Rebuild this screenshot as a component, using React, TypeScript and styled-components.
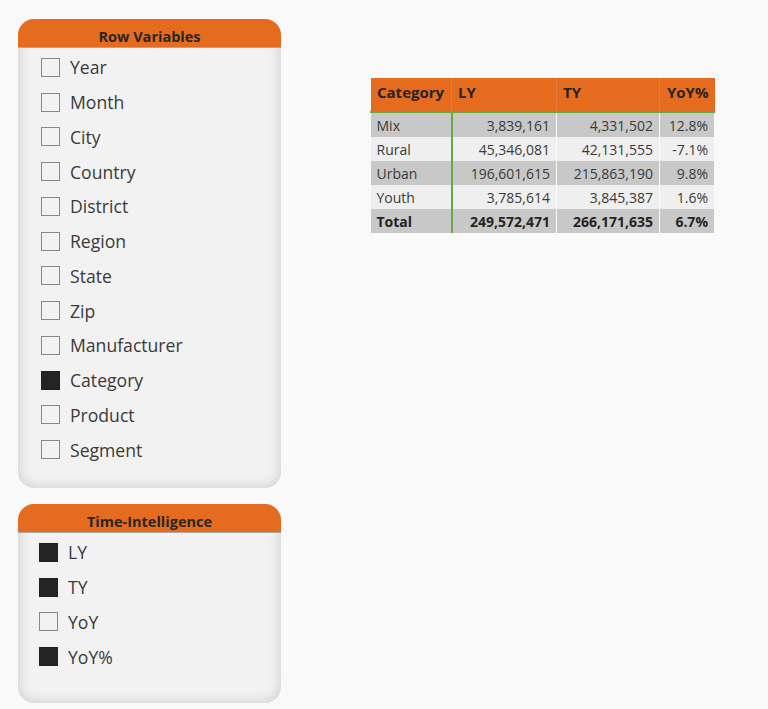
import React from "react";
import styled, { createGlobalStyle } from "styled-components";

const Global = createGlobalStyle`
  html, body { margin: 0; padding: 0; background: #f9f9f9; }
  body { font-family: "Open Sans", "Noto Sans", sans-serif; color: #252423; }
`;

const Page = styled.div`
  display: flex;
  align-items: flex-start;
  gap: 89px;
  padding: 19px 0 0 18px;
  width: 768px;
  height: 709px;
  box-sizing: border-box;
`;

const LeftColumn = styled.div`
  display: flex;
  flex-direction: column;
  gap: 16px;
`;

const Panel = styled.div<{ $height: number }>`
  width: 263px;
  height: ${(p) => p.$height}px;
  border-radius: 16px;
  overflow: hidden;
  background: #f2f2f2;
  box-shadow: inset 0 0 14px rgba(0, 0, 0, 0.17);
  display: flex;
  flex-direction: column;
`;

const PanelHeader = styled.div`
  height: 20px;
  background: #e56c1e;
  border-bottom: 1.5px solid #a8a8a8;
  display: flex;
  align-items: center;
  justify-content: center;
  font-size: 14.5px;
  font-weight: 700;
  color: #2a2622;
  box-sizing: content-box;
  padding-top: 8px;
  line-height: 1;
`;

const List = styled.div<{ $left: number }>`
  display: flex;
  flex-direction: column;
  padding: 2px 0 0 ${(p) => p.$left}px;
`;

const Item = styled.label`
  display: flex;
  align-items: center;
  height: 34.75px;
  gap: 10px;
  font-size: 17.6px;
  color: #3b3a39;
`;

const Box = styled.span<{ $checked: boolean }>`
  width: 19px;
  height: 19px;
  box-sizing: border-box;
  border: 1.5px solid ${(p) => (p.$checked ? "#1f1f1f" : "#8a8886")};
  background: ${(p) => (p.$checked ? "#252423" : "transparent")};
  flex-shrink: 0;
`;

const TableWrap = styled.div`
  margin-top: 59px;
`;

const Table = styled.table`
  border-collapse: collapse;
  font-size: 14px;
  color: #3b3a39;
`;

const HeadCell = styled.th<{ $w: number; $align?: string }>`
  width: ${(p) => p.$w}px;
  height: 34px;
  padding: 0 6px 6px;
  background: #e56c1e;
  text-align: ${(p) => p.$align || "left"};
  font-weight: 700;
  font-size: 15px;
  color: #252423;
  border-bottom: 2px solid #6aa842;
  border-left: 1px solid rgba(255, 255, 255, 0.12);
  box-sizing: border-box;
  vertical-align: middle;
`;

const Row = styled.tr<{ $dark: boolean; $bold?: boolean }>`
  background: ${(p) => (p.$dark ? "#c8c8c8" : "#efefef")};
  font-weight: ${(p) => (p.$bold ? 700 : 400)};
  color: ${(p) => (p.$bold ? "#252423" : "#3b3a39")};
`;

const Cell = styled.td<{ $num?: boolean; $green?: boolean }>`
  height: 22px;
  padding: 2px 6px 0 6px;
  text-align: ${(p) => (p.$num ? "right" : "left")};
  border-right: ${(p) => (p.$green ? "2px solid #6aa842" : "1px solid rgba(255,255,255,0.25)")};
  white-space: nowrap;
  line-height: 1;
  overflow: hidden;
`;

const rowVars = [
  ["Year", false],
  ["Month", false],
  ["City", false],
  ["Country", false],
  ["District", false],
  ["Region", false],
  ["State", false],
  ["Zip", false],
  ["Manufacturer", false],
  ["Category", true],
  ["Product", false],
  ["Segment", false],
] as const;

const timeVars = [
  ["LY", true],
  ["TY", true],
  ["YoY", false],
  ["YoY%", true],
] as const;

const data = [
  ["Mix", "3,839,161", "4,331,502", "12.8%"],
  ["Rural", "45,346,081", "42,131,555", "-7.1%"],
  ["Urban", "196,601,615", "215,863,190", "9.8%"],
  ["Youth", "3,785,614", "3,845,387", "1.6%"],
];

export default function App() {
  return (
    <>
      <Global />
      <Page>
        <LeftColumn>
          <Panel $height={469}>
            <PanelHeader>Row Variables</PanelHeader>
            <List $left={23}>
              {rowVars.map(([name, c]) => (
                <Item key={name}>
                  <Box $checked={c} />
                  {name}
                </Item>
              ))}
            </List>
          </Panel>
          <Panel $height={199}>
            <PanelHeader>Time-Intelligence</PanelHeader>
            <List $left={21}>
              {timeVars.map(([name, c]) => (
                <Item key={name}>
                  <Box $checked={c} />
                  {name}
                </Item>
              ))}
            </List>
          </Panel>
        </LeftColumn>
        <TableWrap>
          <Table>
            <thead>
              <tr>
                <HeadCell $w={81}>Category</HeadCell>
                <HeadCell $w={105}>LY</HeadCell>
                <HeadCell $w={103}>TY</HeadCell>
                <HeadCell $w={55} $align="right">YoY%</HeadCell>
              </tr>
            </thead>
            <tbody>
              {data.map((r, i) => (
                <Row key={r[0]} $dark={i % 2 === 0}>
                  <Cell $green>{r[0]}</Cell>
                  <Cell $num>{r[1]}</Cell>
                  <Cell $num>{r[2]}</Cell>
                  <Cell $num>{r[3]}</Cell>
                </Row>
              ))}
              <Row $dark $bold>
                <Cell $green>Total</Cell>
                <Cell $num>249,572,471</Cell>
                <Cell $num>266,171,635</Cell>
                <Cell $num>6.7%</Cell>
              </Row>
            </tbody>
          </Table>
        </TableWrap>
      </Page>
    </>
  );
}
